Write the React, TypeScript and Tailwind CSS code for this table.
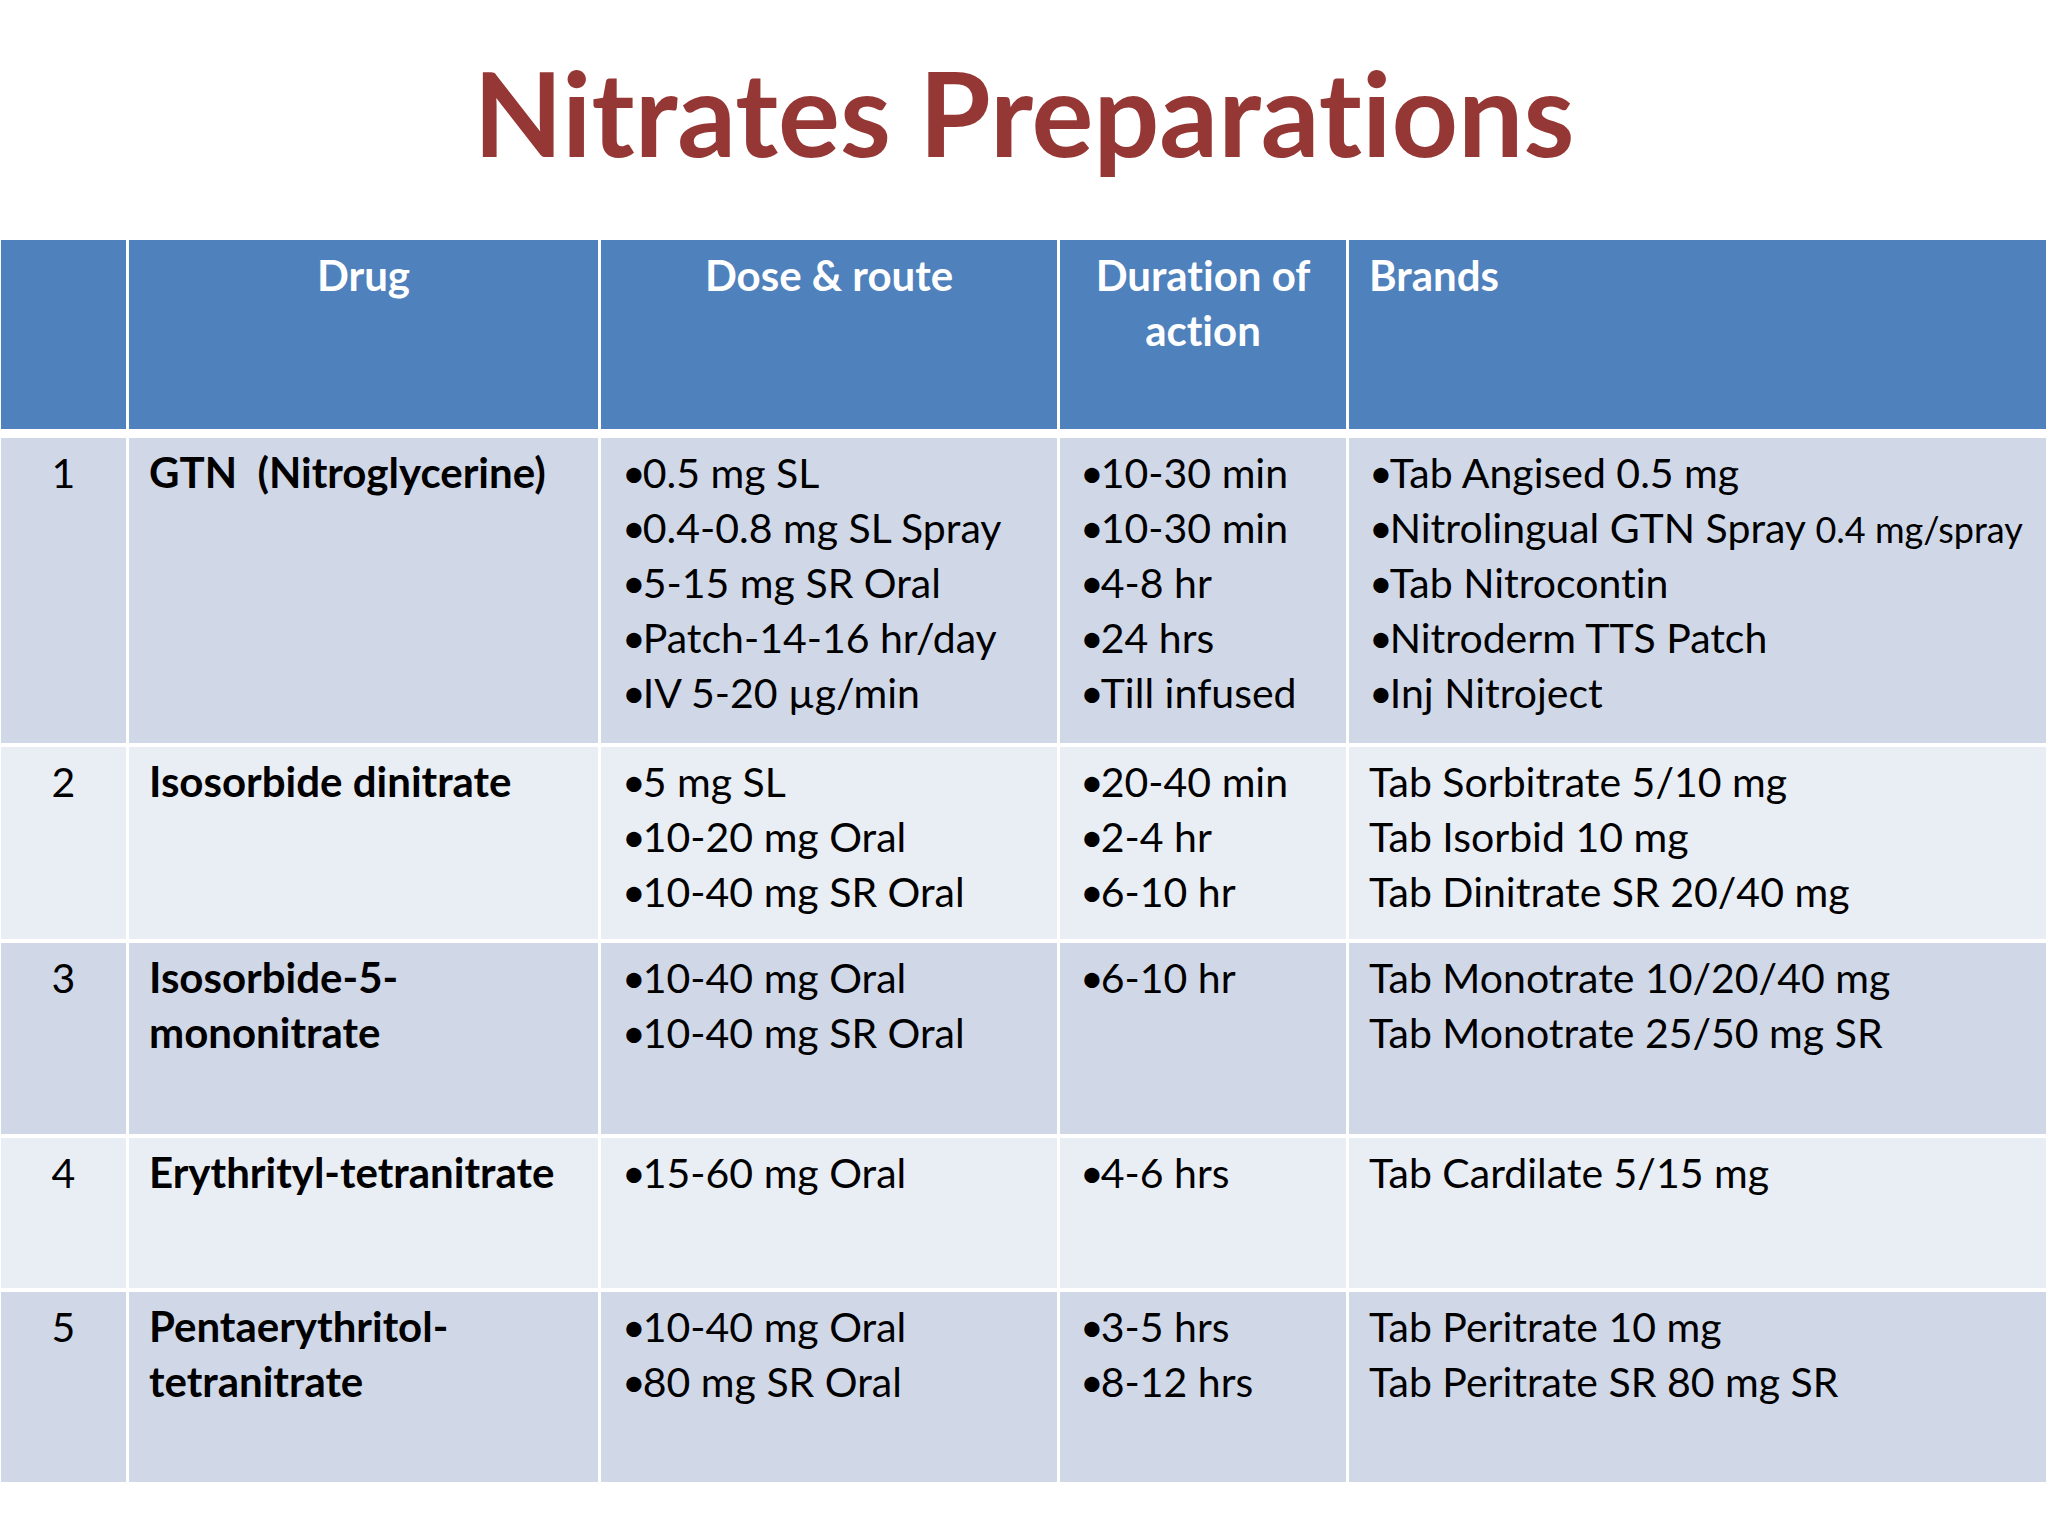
import type { ReactNode } from 'react'

const cols = 'grid grid-cols-[125px_469px_456px_286px_697px] gap-x-[3px]'

type Row = {
  n: string
  drug: string[]
  dose: string[]
  dur: string[]
  brands: ReactNode[]
  h: string
  bg: string
}

// bullet glyph in Lato is wider than the original's, pull text in a bit
function B() {
  return <span className="-mr-[3px]">•</span>
}

const rows: Row[] = [
  {
    n: '1',
    drug: ['GTN\u00a0\u00a0(Nitroglycerine)'],
    dose: ['0.5 mg SL', '0.4-0.8 mg SL Spray', '5-15 mg SR Oral', 'Patch-14-16 hr/day', 'IV 5-20 µg/min'],
    dur: ['10-30 min', '10-30 min', '4-8 hr', '24 hrs', 'Till infused'],
    brands: [
      <>
        <B />
        Tab Angised 0.5 mg
      </>,
      <>
        <B />
        Nitrolingual GTN Spray <span className="text-[36px] leading-none">0.4 mg/spray</span>
      </>,
      <>
        <B />
        Tab Nitrocontin
      </>,
      <>
        <B />
        Nitroderm TTS Patch
      </>,
      <>
        <B />
        Inj Nitroject
      </>,
    ],
    h: 'h-[305px]',
    bg: 'bg-[#d0d8e8]',
  },
  {
    n: '2',
    drug: ['Isosorbide dinitrate'],
    dose: ['5 mg SL', '10-20 mg Oral', '10-40 mg SR Oral'],
    dur: ['20-40 min', '2-4 hr', '6-10 hr'],
    brands: ['Tab Sorbitrate 5/10 mg', 'Tab Isorbid 10 mg', 'Tab Dinitrate SR 20/40 mg'],
    h: 'h-[192px]',
    bg: 'bg-[#e9edf4]',
  },
  {
    n: '3',
    drug: ['Isosorbide-5-', 'mononitrate'],
    dose: ['10-40 mg Oral', '10-40 mg SR Oral'],
    dur: ['6-10 hr'],
    brands: ['Tab Monotrate 10/20/40 mg', 'Tab Monotrate 25/50 mg SR'],
    h: 'h-[191px]',
    bg: 'bg-[#d0d8e8]',
  },
  {
    n: '4',
    drug: ['Erythrityl-tetranitrate'],
    dose: ['15-60 mg Oral'],
    dur: ['4-6 hrs'],
    brands: ['Tab Cardilate 5/15 mg'],
    h: 'h-[150px]',
    bg: 'bg-[#e9edf4]',
  },
  {
    n: '5',
    drug: ['Pentaerythritol-', 'tetranitrate'],
    dose: ['10-40 mg Oral', '80 mg SR Oral'],
    dur: ['3-5 hrs', '8-12 hrs'],
    brands: ['Tab Peritrate 10 mg', 'Tab Peritrate SR 80 mg SR'],
    h: 'h-[190px]',
    bg: 'bg-[#d0d8e8]',
  },
]

function Lines({ items, bullet }: { items: ReactNode[]; bullet?: boolean }) {
  return (
    <>
      {items.map((t, i) => (
        <div key={i} className="whitespace-nowrap h-[55px]">
          {bullet && <B />}
          {t}
        </div>
      ))}
    </>
  )
}

export default function App() {
  return (
    <div className="w-[2048px] h-[1536px] bg-white font-[Lato,'Noto_Sans',sans-serif] text-black [font-variant-ligatures:none]">
      <h1 className="h-[240px] pt-[55px] text-center text-[116px] leading-[116px] font-bold text-[#953735]">
        Nitrates Preparations
      </h1>

      <div className="pl-px flex flex-col gap-[4px] text-[41px] leading-[55px]">
        <div className={`${cols} h-[189px] mb-[5px] text-[42px] text-white font-bold`}>
          <div className="bg-[#4f81bd]" />
          <div className="bg-[#4f81bd] pt-[8px] text-center">Drug</div>
          <div className="bg-[#4f81bd] pt-[8px] text-center">Dose &amp; route</div>
          <div className="bg-[#4f81bd] pt-[8px] text-center">
            Duration of
            <br />
            action
          </div>
          <div className="bg-[#4f81bd] pt-[8px] px-[20px]">Brands</div>
        </div>

        {rows.map((r) => (
          <div key={r.n} className={`${cols} ${r.h}`}>
            <div className={`${r.bg} pt-[7px] text-center`}>{r.n}</div>
            <div className={`${r.bg} pt-[7px] px-[20px] text-[42px] font-bold`}>
              <Lines items={r.drug} />
            </div>
            <div className={`${r.bg} pt-[7px] px-[21px]`}>
              <Lines items={r.dose} bullet />
            </div>
            <div className={`${r.bg} pt-[7px] px-[20px]`}>
              <Lines items={r.dur} bullet />
            </div>
            <div className={`${r.bg} pt-[7px] px-[20px]`}>
              <Lines items={r.brands} />
            </div>
          </div>
        ))}
      </div>
    </div>
  )
}
